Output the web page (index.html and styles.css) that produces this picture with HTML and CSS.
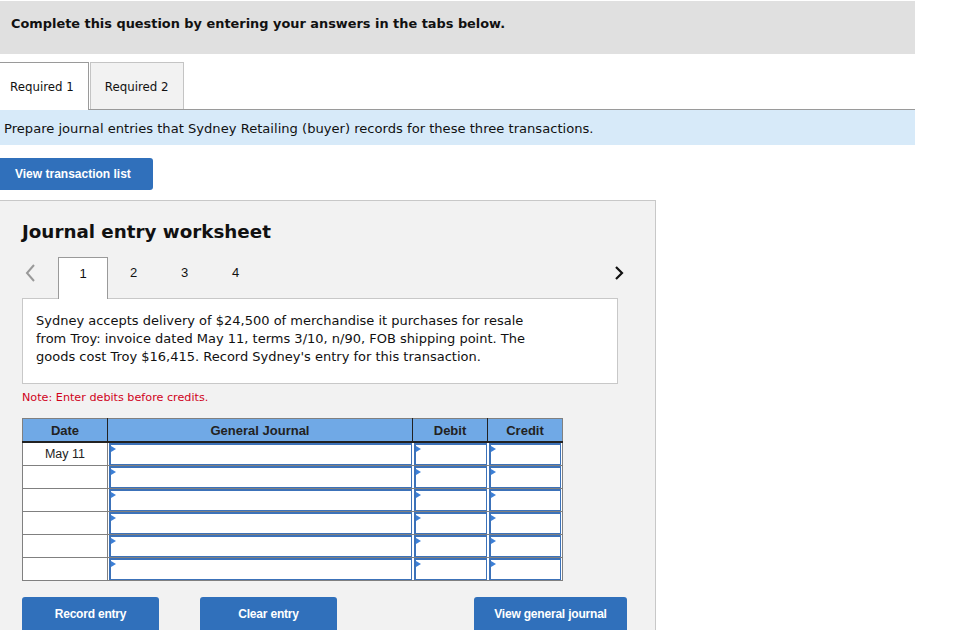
FILE: index.html
```html
<!DOCTYPE html>
<html>
<head>
  <title>Journal entry worksheet</title>
  <link rel="stylesheet" href="styles.css">
</head>
<body>
  <div class="top-bar">Complete this question by entering your answers in the tabs below.</div>

  <div class="tabs">
    <div class="tab active">Required 1</div>
    <div class="tab">Required 2</div>
  </div>
  <div class="info">Prepare journal entries that Sydney Retailing (buyer) records for these three transactions.</div>

  <button class="btn btn-list">View transaction list</button>

  <div class="worksheet">
    <h2>Journal entry worksheet</h2>

    <div class="pager">
      <span class="arrow prev">
        <svg width="12" height="18" viewBox="0 0 12 18"><path d="M9 1 L2 9 L9 17" fill="none" stroke="#999" stroke-width="2"/></svg>
      </span>
      <div class="page active">1</div>
      <div class="page">2</div>
      <div class="page">3</div>
      <div class="page">4</div>
      <span class="arrow next">
        <svg width="12" height="16" viewBox="0 0 12 16"><path d="M3 2 L9 8 L3 14" fill="none" stroke="#111" stroke-width="2.2"/></svg>
      </span>
    </div>

    <div class="desc">
      Sydney accepts delivery of $24,500 of merchandise it purchases for resale<br>
      from Troy: invoice dated May 11, terms 3/10, n/90, FOB shipping point. The<br>
      goods cost Troy $16,415. Record Sydney's entry for this transaction.
    </div>

    <p class="note">Note: Enter debits before credits.</p>

    <table class="journal">
      <thead>
        <tr>
          <th class="col-date">Date</th>
          <th class="col-acct">General Journal</th>
          <th class="col-num">Debit</th>
          <th class="col-num">Credit</th>
        </tr>
      </thead>
      <tbody>
        <tr>
          <td class="date">May 11</td>
          <td class="cell"><div class="field"></div></td>
          <td class="cell"><div class="field"></div></td>
          <td class="cell"><div class="field"></div></td>
        </tr>
        <tr>
          <td class="date"></td>
          <td class="cell"><div class="field"></div></td>
          <td class="cell"><div class="field"></div></td>
          <td class="cell"><div class="field"></div></td>
        </tr>
        <tr>
          <td class="date"></td>
          <td class="cell"><div class="field"></div></td>
          <td class="cell"><div class="field"></div></td>
          <td class="cell"><div class="field"></div></td>
        </tr>
        <tr>
          <td class="date"></td>
          <td class="cell"><div class="field"></div></td>
          <td class="cell"><div class="field"></div></td>
          <td class="cell"><div class="field"></div></td>
        </tr>
        <tr>
          <td class="date"></td>
          <td class="cell"><div class="field"></div></td>
          <td class="cell"><div class="field"></div></td>
          <td class="cell"><div class="field"></div></td>
        </tr>
        <tr>
          <td class="date"></td>
          <td class="cell"><div class="field"></div></td>
          <td class="cell"><div class="field"></div></td>
          <td class="cell"><div class="field"></div></td>
        </tr>
      </tbody>
    </table>

    <div class="actions">
      <button class="btn btn-record">Record entry</button>
      <button class="btn btn-clear">Clear entry</button>
      <button class="btn btn-view">View general journal</button>
    </div>
  </div>
</body>
</html>
```

FILE: styles.css
```css
body {
  margin: 0;
  padding-top: 1px;
  font-family: "DejaVu Sans", Verdana, sans-serif;
  color: #111;
  background: #fff;
  overflow: hidden;
}

.top-bar {
  width: 904px;
  height: 53px;
  padding-left: 11px;
  background-color: #e0e0e0;
  font-size: 12.9px;
  font-weight: bold;
  line-height: 45px;
}

.tabs {
  display: flex;
  width: 915px;
  margin-top: 8px;
  border-bottom: 1px solid #9a9a9a;
}

.tab {
  height: 46px;
  line-height: 48px;
  font-size: 11.8px;
  padding: 0 14px;
  margin-bottom: -1px;
  border: 1px solid #c4c4c4;
  border-bottom: none;
  background-color: #f2f2f2;
  margin-left: 1px;
}

.tab.active {
  margin-left: -5px;
  border-color: #9a9a9a;
  background-color: #fff;
  height: 47px;
}

.info {
  width: 911px;
  height: 35px;
  padding-left: 4px;
  background-color: #d7eaf9;
  font-size: 13.1px;
  line-height: 37px;
}

.btn {
  border: none;
  border-radius: 2px;
  background-color: #3070bb;
  color: #fff;
  font-family: "Liberation Sans", Arial, sans-serif;
  font-weight: bold;
  font-size: 12px;
  letter-spacing: -0.2px;
  cursor: pointer;
}

.btn-list {
  display: block;
  width: 153px;
  height: 32px;
  margin-top: 13px;
  padding: 0 0 0 15px;
  text-align: left;
  letter-spacing: 0;
  border-radius: 0 3px 3px 0;
}

.worksheet {
  width: 656px;
  height: 440px;
  margin-top: 10px;
  border: 1px solid #c8c8c8;
  border-left: none;
  background-color: #f2f2f2;
  padding: 0 0 0 22px;
  box-sizing: border-box;
}

.worksheet h2 {
  margin: 20px 0 0;
  font-size: 18.3px;
  font-weight: bold;
  line-height: 22px;
}

.pager {
  display: flex;
  align-items: flex-end;
  width: 603px;
  height: 41px;
  margin-top: 14px;
  font-family: "Liberation Sans", Arial, sans-serif;
  font-size: 13px;
}

.arrow {
  display: flex;
  align-items: center;
  height: 41px;
  padding-bottom: 10px;
  box-sizing: border-box;
}

.arrow.prev {
  width: 36px;
  padding-left: 3px;
}

.arrow.next {
  margin-left: auto;
  width: 12px;
}

.page {
  width: 51px;
  height: 41px;
  line-height: 32px;
  text-align: center;
  box-sizing: border-box;
}

.page.active {
  width: 50px;
  height: 42px;
  margin-bottom: -1px;
  border: 1px solid #9a9a9a;
  border-bottom: none;
  background-color: #fff;
  position: relative;
  z-index: 1;
}

.desc {
  width: 596px;
  height: 86px;
  box-sizing: border-box;
  padding: 13px 0 0 13px;
  background-color: #fff;
  border: 1px solid #c8c8c8;
  font-size: 13px;
  line-height: 18px;
}

.note {
  margin: 6px 0 0;
  color: #d0021b;
  font-size: 11.2px;
  line-height: 16px;
}

.journal {
  margin-top: 12px;
  border-collapse: collapse;
  border: 1px solid #808080;
  font-family: "Liberation Sans", Arial, sans-serif;
  font-size: 12.5px;
  background-color: #fff;
}

.journal th {
  height: 22px;
  padding: 0;
  background-color: #70a9e6;
  color: #222;
  font-size: 13px;
  font-weight: bold;
  border-left: 1px solid #222;
  border-bottom: 2px solid #222;
}

.journal th:first-child {
  border-left: none;
}

.col-date { width: 84px; }
.col-acct { width: 304px; }
.col-num { width: 74px; }

.journal td {
  height: 22px;
  padding: 0;
  border-top: 1px solid #808080;
}

.journal tbody tr:first-child td {
  border-top: none;
}

.journal td.date {
  text-align: center;
  vertical-align: top;
  padding-top: 4px;
  height: 18px;
  color: #222;
  border-right: 1px solid #808080;
}

.journal td.cell {
  padding: 0 1px 0 1px;
  vertical-align: top;
}

.field {
  position: relative;
  height: 19px;
  border: 2px solid #3c72b9;
  border-right-width: 1px;
  border-bottom-width: 1px;
  background-color: #fff;
}

.field::before {
  content: "";
  position: absolute;
  top: 1px;
  left: 0;
  border-top: 3px solid transparent;
  border-bottom: 3px solid transparent;
  border-left: 5px solid #3c7fd6;
}

.actions {
  display: flex;
  margin-top: 16px;
}

.actions .btn {
  height: 34px;
  border-radius: 3px 3px 0 0;
}

.btn-record,
.btn-clear {
  width: 137px;
  margin-right: 41px;
}

.btn-view {
  width: 153px;
  margin-left: 96px;
}
```
